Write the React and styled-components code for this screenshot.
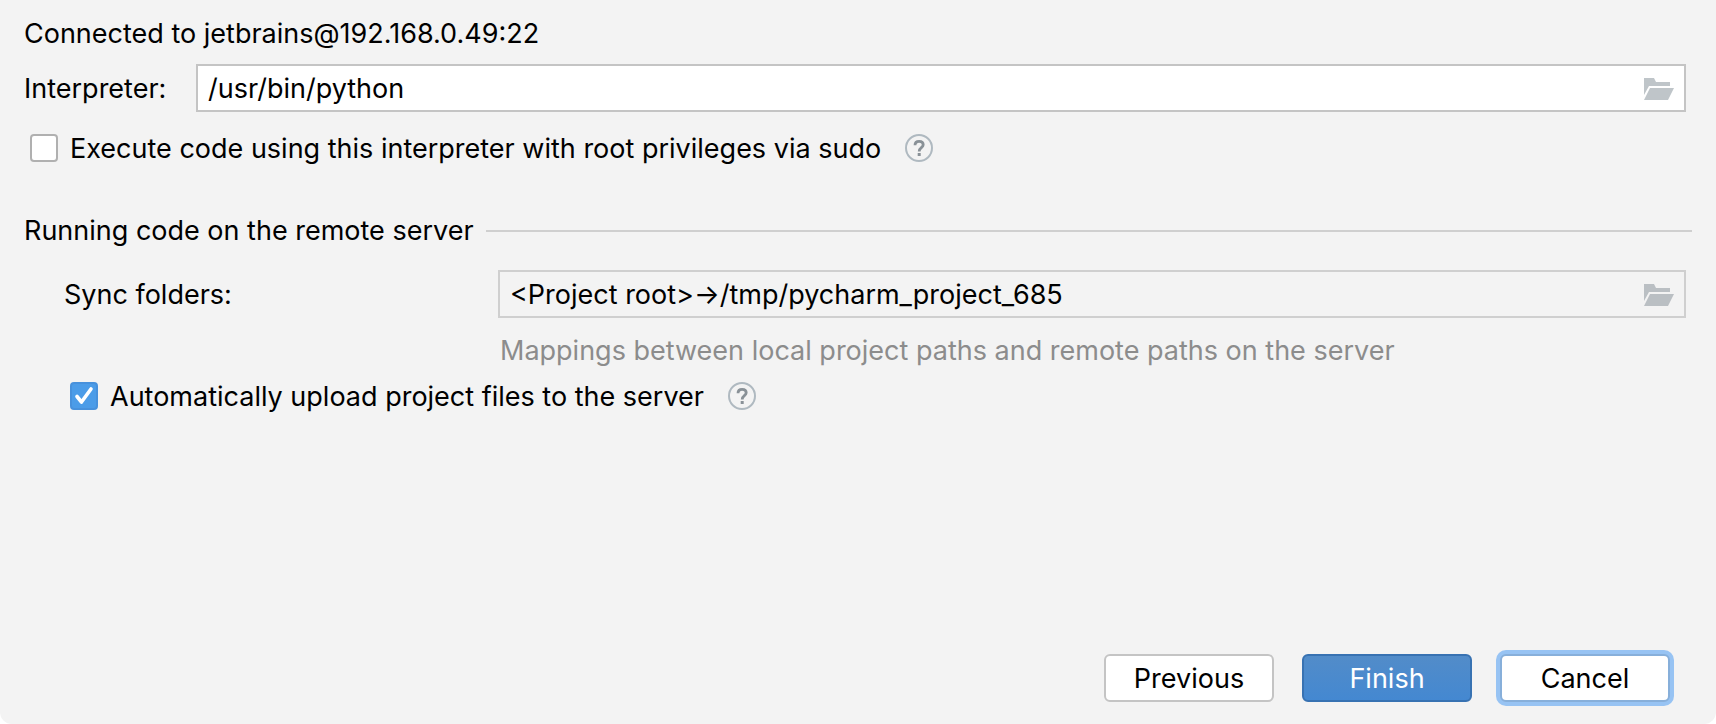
import React, { useState } from "react";
import styled, { createGlobalStyle, css } from "styled-components";

const GlobalStyle = createGlobalStyle`
  * {
    box-sizing: border-box;
  }
  body {
    margin: 0;
    background: #ffffff;
    color: #000000;
  }
  body,
  input,
  button {
    font-family: Inter, "Liberation Sans", sans-serif;
    font-size: 27px;
    line-height: 32px;
  }
`;

const Dialog = styled.form`
  display: flex;
  flex-direction: column;
  min-height: 100vh;
  padding: 18px 24px 22px;
  background: #f3f3f3;
  border-radius: 0 0 12px 12px;
`;

const Status = styled.p`
  margin: 0 0 14px;
`;

const FieldRow = styled.div`
  display: grid;
  grid-template-columns: ${({ $labelWidth }) => $labelWidth}px 1fr;
  align-items: center;
  margin-right: 6px;
`;

const FieldLabel = styled.label`
  padding-top: 2px;
`;

const Field = styled.div`
  display: flex;
  align-items: center;
  height: 48px;
  padding: 2px 10px 0;
  border: 2px solid ${({ $readOnly }) => ($readOnly ? "#cfcfcf" : "#c4c4c4")};
  background: ${({ $readOnly }) => ($readOnly ? "#f3f3f3" : "#ffffff")};
`;

const FieldInput = styled.input`
  flex: 1;
  min-width: 0;
  padding: 0;
  border: none;
  outline: none;
  background: transparent;
  color: #000000;
`;

const IconButton = styled.button`
  display: flex;
  padding: 0;
  border: none;
  background: transparent;
  color: ${({ $color }) => $color};
  cursor: pointer;
`;

const CheckRow = styled.div`
  display: flex;
  align-items: center;
  padding-left: 6px;
`;

const CheckLabel = styled.label`
  display: flex;
  align-items: center;
  gap: 12px;
  margin-right: 24px;
`;

const CheckText = styled.span`
  padding-top: 2px;
`;

const CheckBoxWrap = styled.span`
  position: relative;
  display: flex;

  svg {
    position: absolute;
    inset: 0;
    display: none;
    pointer-events: none;
  }
`;

const CheckBoxInput = styled.input`
  appearance: none;
  width: 28px;
  height: 28px;
  margin: 0;
  border: 2px solid #b0b0b0;
  border-radius: 4px;
  background: #ffffff;

  &:checked {
    border-color: #4791dc;
    background: #4b9ce8;
  }
  &:checked + svg {
    display: block;
  }
`;

const InterpreterSection = styled.section`
  display: flex;
  flex-direction: column;
  gap: 19px;
`;

const ServerSection = styled.section`
  margin-top: 50px;
`;

const SectionHeader = styled.div`
  display: flex;
  align-items: center;
  gap: 12px;
  margin-bottom: 23px;

  &::after {
    content: "";
    flex: 1;
    height: 2px;
    background: #cfcfcf;
  }
`;

const SectionTitle = styled.h2`
  margin: 0;
  font-size: 27px;
  font-weight: 400;
`;

const SectionBody = styled.div`
  padding-left: 40px;
`;

const Hint = styled.p`
  margin: 17px 0 12px 436px;
  color: #8c8c8c;
`;

const Footer = styled.div`
  display: flex;
  justify-content: flex-end;
  gap: 28px;
  margin-top: auto;
  padding-right: 22px;
`;

const Button = styled.button`
  width: 170px;
  height: 48px;
  padding: 2px 0 0;
  border: 2px solid #c4c4c4;
  border-radius: 6px;
  background: #ffffff;
  color: #000000;
  cursor: pointer;

  ${({ $primary }) =>
    $primary &&
    css`
      border-color: #3872b2;
      background: linear-gradient(#528cc9, #4488d1);
      color: #ffffff;
    `}

  ${({ $focused }) =>
    $focused &&
    css`
      border-color: #87afda;
      box-shadow: 0 0 0 4px #97c3f3;
    `}
`;

const FolderIcon = () => (
  <svg width="30" height="22" viewBox="0 0 30 22" fill="currentColor">
    <path d="M0 0H10L12 4H26V8H5L0 17Z" />
    <path d="M6 10H30L24 22H0Z" />
  </svg>
);

const HelpIcon = () => (
  <svg width="28" height="28" viewBox="0 0 28 28" fill="none">
    <circle cx="14" cy="14" r="13" stroke="#afb9c0" strokeWidth="2" />
    <path
      d="M10 11.2C10 8.7 11.7 7.3 14.1 7.3C16.5 7.3 18.2 8.7 18.2 10.8C18.2 13.7 14.2 13.7 14.2 17.4"
      stroke="#899197"
      strokeWidth="2.8"
    />
    <rect x="12.7" y="19" width="3" height="3" fill="#899197" />
  </svg>
);

const CheckBox = ({ label, checked, onChange }) => (
  <CheckLabel>
    <CheckBoxWrap>
      <CheckBoxInput type="checkbox" checked={checked} onChange={onChange} />
      <svg width="28" height="28" viewBox="0 0 28 28" fill="none">
        <path
          d="M7 14.5L11.5 20L21 7"
          stroke="#ffffff"
          strokeWidth="3.6"
          strokeLinecap="round"
          strokeLinejoin="round"
        />
      </svg>
    </CheckBoxWrap>
    <CheckText>{label}</CheckText>
  </CheckLabel>
);

const HelpButton = () => (
  <IconButton type="button" aria-label="Help">
    <HelpIcon />
  </IconButton>
);

const App = () => {
  const [interpreter, setInterpreter] = useState("/usr/bin/python");
  const [useSudo, setUseSudo] = useState(false);
  const [autoUpload, setAutoUpload] = useState(true);

  return (
    <>
      <GlobalStyle />
      <Dialog onSubmit={e => e.preventDefault()}>
        <Status>Connected to jetbrains@192.168.0.49:22</Status>
        <InterpreterSection>
          <FieldRow $labelWidth={172}>
            <FieldLabel htmlFor="interpreter">Interpreter:</FieldLabel>
            <Field>
              <FieldInput
                id="interpreter"
                value={interpreter}
                onChange={e => setInterpreter(e.target.value)}
              />
              <IconButton type="button" aria-label="Browse" $color="#bfc5c9">
                <FolderIcon />
              </IconButton>
            </Field>
          </FieldRow>
          <CheckRow>
            <CheckBox
              label="Execute code using this interpreter with root privileges via sudo"
              checked={useSudo}
              onChange={e => setUseSudo(e.target.checked)}
            />
            <HelpButton />
          </CheckRow>
        </InterpreterSection>
        <ServerSection>
          <SectionHeader>
            <SectionTitle>Running code on the remote server</SectionTitle>
          </SectionHeader>
          <SectionBody>
            <FieldRow $labelWidth={434}>
              <FieldLabel htmlFor="sync-folders">Sync folders:</FieldLabel>
              <Field $readOnly>
                <FieldInput
                  id="sync-folders"
                  value="<Project root>→/tmp/pycharm_project_685"
                  readOnly
                />
                <IconButton type="button" aria-label="Browse" $color="#babfc3">
                  <FolderIcon />
                </IconButton>
              </Field>
            </FieldRow>
            <Hint>
              Mappings between local project paths and remote paths on the server
            </Hint>
            <CheckRow>
              <CheckBox
                label="Automatically upload project files to the server"
                checked={autoUpload}
                onChange={e => setAutoUpload(e.target.checked)}
              />
              <HelpButton />
            </CheckRow>
          </SectionBody>
        </ServerSection>
        <Footer>
          <Button type="button">Previous</Button>
          <Button type="submit" $primary>
            Finish
          </Button>
          <Button type="button" $focused>
            Cancel
          </Button>
        </Footer>
      </Dialog>
    </>
  );
};

export default App;
